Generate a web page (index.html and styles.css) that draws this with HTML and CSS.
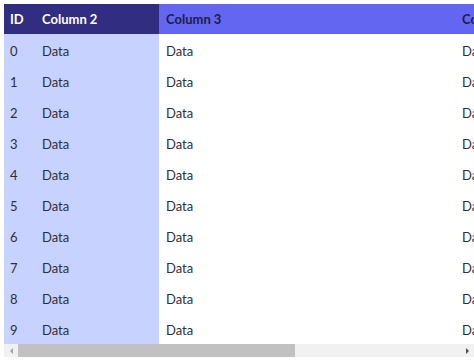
FILE: index.html
```html
<!DOCTYPE html>
<html>
<head>
<meta charset="utf-8">
<link rel="stylesheet" href="styles.css">
</head>
<body>
<div class="frame">
  <div class="scroller">
    <table class="grid">
      <colgroup>
        <col class="c-id"><col class="c-2"><col class="c-3"><col class="c-4">
      </colgroup>
      <thead>
        <tr>
          <th class="sticky first">ID</th>
          <th class="sticky">Column 2</th>
          <th>Column 3</th>
          <th>Column 4</th>
        </tr>
      </thead>
      <tbody>
        <tr><td class="sticky first">0</td><td class="sticky">Data</td><td>Data</td><td>Data</td></tr>
        <tr><td class="sticky first">1</td><td class="sticky">Data</td><td>Data</td><td>Data</td></tr>
        <tr><td class="sticky first">2</td><td class="sticky">Data</td><td>Data</td><td>Data</td></tr>
        <tr><td class="sticky first">3</td><td class="sticky">Data</td><td>Data</td><td>Data</td></tr>
        <tr><td class="sticky first">4</td><td class="sticky">Data</td><td>Data</td><td>Data</td></tr>
        <tr><td class="sticky first">5</td><td class="sticky">Data</td><td>Data</td><td>Data</td></tr>
        <tr><td class="sticky first">6</td><td class="sticky">Data</td><td>Data</td><td>Data</td></tr>
        <tr><td class="sticky first">7</td><td class="sticky">Data</td><td>Data</td><td>Data</td></tr>
        <tr><td class="sticky first">8</td><td class="sticky">Data</td><td>Data</td><td>Data</td></tr>
        <tr><td class="sticky first">9</td><td class="sticky">Data</td><td>Data</td><td>Data</td></tr>
      </tbody>
    </table>
  </div>
  <div class="hbar">
    <div class="arrow arrow-left"></div>
    <div class="track"><div class="thumb"></div></div>
    <div class="arrow arrow-right"></div>
  </div>
</div>
</body>
</html>
```
FILE: styles.css
```css
html, body {
  margin: 0;
  padding: 0;
  background: #ffffff;
}
body {
  padding: 4px 0 0 4px;
  font-family: "Lato", "Noto Sans", sans-serif;
  font-size: 13px;
  color: #2f2f3a;
}
.frame {
  width: 470px;
  display: flex;
  flex-direction: column;
}
.scroller {
  width: 470px;
  overflow: hidden;
}
.grid {
  border-collapse: collapse;
  table-layout: fixed;
  width: 751px;
}
.c-id { width: 31px; }
.c-2 { width: 124px; }
.c-3 { width: 296px; }
.c-4 { width: 300px; }
.grid th, .grid td {
  box-sizing: border-box;
  padding: 2px 7px 0 7px;
  text-align: left;
  white-space: nowrap;
  overflow: hidden;
}
.grid th.first, .grid td.first {
  padding-left: 6px;
  padding-right: 0;
}
.grid th {
  height: 30px;
  padding-top: 0;
  font-weight: 700;
  background: #6366f1;
  color: #1e1b4b;
}
.grid td {
  height: 31px;
  background: #ffffff;
}
.grid th.sticky {
  background: #312e81;
  color: #ffffff;
}
.grid td.sticky {
  background: #c7d2fe;
}
.hbar {
  height: 13px;
  display: flex;
  background: #f1f1f1;
}
.arrow {
  width: 14px;
  flex: none;
  display: flex;
  align-items: center;
  justify-content: center;
}
.arrow-left::before {
  content: "";
  border-style: solid;
  border-width: 3px 3px 3px 0;
  border-color: transparent #a3a3a3 transparent transparent;
}
.arrow-right::before {
  content: "";
  border-style: solid;
  border-width: 3px 0 3px 3px;
  border-color: transparent transparent transparent #505050;
}
.track {
  flex: 1;
  display: flex;
  align-items: stretch;
}
.thumb {
  width: 277px;
  background: #c1c1c1;
  margin: 0;
}
```
